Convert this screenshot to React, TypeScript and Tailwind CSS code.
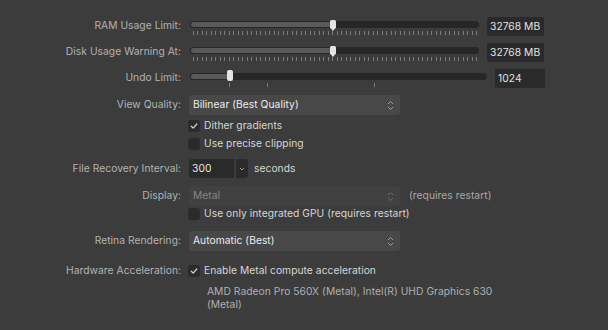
import React from 'react'

const RAM_TICKS = Array.from({ length: 64 }, (_, i) => 3 + (i * 283) / 63)

function Ticks({ xs, width }: { xs: number[]; width: number }) {
  return (
    <svg width={width} height={4} className="absolute left-0 top-[10px]">
      {xs.map((x, i) => (
        <rect key={i} x={Math.round(x)} y={0} width={1} height={4} fill="#7c7c7c" />
      ))}
    </svg>
  )
}

function PointedThumb({ left }: { left: number }) {
  return (
    <svg width={6} height={11} className="absolute top-[-1px]" style={{ left }}>
      <path d="M1.5 0 H4.5 Q6 0 6 1.5 V7.5 L3 11 L0 7.5 V1.5 Q0 0 1.5 0Z" fill="#e4e4e4" />
    </svg>
  )
}

function Label({ children }: { children: React.ReactNode }) {
  return <div className="w-[181px] shrink-0 text-right text-[#b3b3b3]">{children}</div>
}

function Chevrons({ dim }: { dim?: boolean }) {
  return (
    <svg width={7} height={11} viewBox="0 0 7 11">
      <path d="M1 4 L3.5 1.5 L6 4 M1 7 L3.5 9.5 L6 7" stroke={dim ? '#6c6c6c' : '#a0a0a0'} strokeWidth={1} fill="none" />
    </svg>
  )
}

function Check({ checked }: { checked?: boolean }) {
  return (
    <div className="flex h-[12px] w-[12px] shrink-0 items-center justify-center rounded-[3px] bg-[#2b2b2b]">
      {checked && (
        <svg width={10} height={10} viewBox="0 0 10 10">
          <path d="M2.3 5.3 L4.2 7.1 L7.8 3" stroke="#cfcfcf" strokeWidth={1.3} fill="none" strokeLinecap="round" strokeLinejoin="round" />
        </svg>
      )}
    </div>
  )
}

function RamSlider({ label, value }: { label: string; value: string }) {
  return (
    <div className="flex h-[26px] items-start">
      <div className="mt-[7px] leading-[14px]"><Label>{label}</Label></div>
      <div className="relative ml-[9px] mt-[10px] h-[7px] w-[289px] rounded-full bg-[#272727]">
        <div className="absolute left-[1px] top-[1px] h-[5px] w-[142px] rounded-full bg-[#595959]" />
        <PointedThumb left={140} />
        <Ticks xs={RAM_TICKS} width={289} />
      </div>
      <div className="ml-[8px] mt-[6px] flex h-[19px] w-[57px] items-center rounded-[2px] bg-[#2a2a2a] pl-[3px] text-[#e2e2e2]">{value}</div>
    </div>
  )
}

export default function App() {
  return (
    <div className="h-[330px] w-[608px] overflow-hidden bg-[#3c3c3c] pt-[11px] font-['Inter','Liberation_Sans',sans-serif] text-[10.25px] tracking-[0.05px] text-[#d6d6d6]">
      <RamSlider label="RAM Usage Limit:" value="32768 MB" />
      <RamSlider label="Disk Usage Warning At:" value="32768 MB" />

      <div className="flex h-[26px] items-start">
        <div className="mt-[7px] leading-[14px]"><Label>Undo Limit:</Label></div>
        <div className="relative ml-[9px] mt-[10px] h-[7px] w-[297px] rounded-full bg-[#272727]">
          <div className="absolute left-[1px] top-[1px] h-[5px] w-[38px] rounded-full bg-[#595959]" />
          <div className="absolute left-[37px] top-[-3px] h-[11px] w-[6px] rounded-[2px] bg-[#e4e4e4]" />
          <Ticks xs={[39, 77, 184]} width={297} />
        </div>
        <div className="ml-[8px] mt-[6px] flex h-[19px] w-[50px] items-center rounded-[2px] bg-[#2a2a2a] pl-[3px] text-[#e2e2e2]">1024</div>
      </div>

      <div className="mt-[6px] flex h-[20px] items-center">
        <Label>View Quality:</Label>
        <div className="ml-[8px] flex h-[20px] w-[211px] items-center justify-between rounded-[3px] bg-[#484848] pl-[4px] pr-[6px] text-[#ececec]">
          <span>Bilinear (Best Quality)</span>
          <Chevrons />
        </div>
      </div>

      <div className="mt-[2px] flex h-[18px] items-center pl-[188px]">
        <Check checked />
        <span className="ml-[4px]">Dither gradients</span>
      </div>
      <div className="flex h-[18px] items-center pl-[188px]">
        <Check />
        <span className="ml-[4px]">Use precise clipping</span>
      </div>

      <div className="mt-[6px] flex h-[19px] items-center">
        <Label>File Recovery Interval:</Label>
        <div className="ml-[8px] flex h-[19px] w-[45px] items-center rounded-l-[3px] bg-[#2a2a2a] pl-[3px] text-[#e6e6e6]">300</div>
        <div className="ml-[2px] flex h-[19px] w-[12px] items-center justify-center rounded-r-[3px] bg-[#2a2a2a]">
          <svg width={6} height={4} viewBox="0 0 6 4">
            <path d="M1 1 L3 3 L5 1" stroke="#9a9a9a" strokeWidth={1} fill="none" />
          </svg>
        </div>
        <span className="ml-[6px]">seconds</span>
      </div>

      <div className="mt-[8px] flex h-[20px] items-center">
        <Label>Display:</Label>
        <div className="ml-[8px] flex h-[20px] w-[211px] items-center justify-between rounded-[3px] bg-[#414141] pl-[4px] pr-[6px] text-[#858585]">
          <span>Metal</span>
          <Chevrons dim />
        </div>
        <span className="ml-[9px] text-[#a8a8a8]">(requires restart)</span>
      </div>
      <div className="flex h-[16px] items-center pl-[188px]">
        <Check />
        <span className="ml-[4px]">Use only integrated GPU (requires restart)</span>
      </div>

      <div className="mt-[9px] flex h-[20px] items-center">
        <Label>Retina Rendering:</Label>
        <div className="ml-[8px] flex h-[20px] w-[211px] items-center justify-between rounded-[3px] bg-[#484848] pl-[4px] pr-[6px] text-[#ececec]">
          <span>Automatic (Best)</span>
          <Chevrons />
        </div>
      </div>

      <div className="mt-[10px] flex h-[19px] items-center">
        <Label>Hardware Acceleration:</Label>
        <div className="ml-[7px] flex items-center">
          <Check checked />
          <span className="ml-[4px]">Enable Metal compute acceleration</span>
        </div>
      </div>
      <div className="mt-[5px] pl-[207px] leading-[13px] text-[#b0b0b0]">
        AMD Radeon Pro 560X (Metal), Intel(R) UHD Graphics 630
        <br />
        (Metal)
      </div>
    </div>
  )
}
